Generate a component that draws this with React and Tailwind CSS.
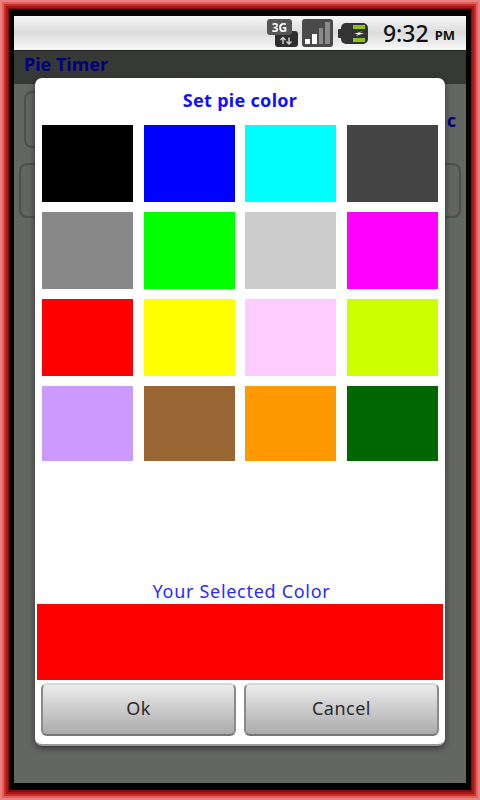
const swatches = [
  "bg-[#000000]", "bg-[#0000ff]", "bg-[#00ffff]", "bg-[#444444]",
  "bg-[#888888]", "bg-[#00ff00]", "bg-[#cccccc]", "bg-[#ff00ff]",
  "bg-[#ff0000]", "bg-[#ffff00]", "bg-[#ffccff]", "bg-[#ccff00]",
  "bg-[#cc99ff]", "bg-[#996633]", "bg-[#ff9900]", "bg-[#006600]",
];

function NetworkIcon() {
  return (
    <svg width="31" height="28" viewBox="0 0 31 28" className="blur-[0.4px]">
      <rect x="8" y="12" width="23" height="16" rx="3" fill="#2e2e2e" />
      <rect x="0" y="0" width="25" height="16" rx="3" fill="#555" />
      <text x="12.5" y="12.5" textAnchor="middle" fontSize="12" fontWeight="700" fill="#fff">3G</text>
      <path d="M16 25 V19 M13.5 21 L16 18.5 L18.5 21 M22 18.5 V24.5 M19.5 22.5 L22 25 L24.5 22.5" stroke="#ccc" strokeWidth="1.5" fill="none" />
    </svg>
  );
}

function SignalIcon() {
  return (
    <svg width="31" height="28" viewBox="0 0 31 28" className="blur-[0.4px]">
      <rect x="0" y="0" width="31" height="28" rx="3" fill="#4a4a4a" />
      <rect x="3" y="20" width="5" height="5" fill="#fff" />
      <rect x="10" y="15" width="5" height="10" fill="#fff" />
      <rect x="17" y="9" width="4" height="16" fill="#8a8a8a" />
      <rect x="23" y="3" width="5" height="22" fill="#8a8a8a" />
    </svg>
  );
}

function BatteryIcon() {
  return (
    <svg width="30" height="21" viewBox="0 0 30 21" className="blur-[0.4px]">
      <rect x="0" y="6" width="5" height="9" rx="1" fill="#333" />
      <rect x="3" y="0" width="27" height="21" rx="5" fill="#333" />
      <rect x="15" y="2" width="12" height="4" fill="#8dc21f" />
      <rect x="15" y="15" width="12" height="4" fill="#8dc21f" />
      <path d="M25 8 L16 11 L20 11 L18 13 L26 10 L21 10 Z" fill="#fff" />
    </svg>
  );
}

function BackButton({ className }) {
  return <div className={`absolute rounded-lg border-2 border-[#4e504e] bg-[#626462] ${className}`} />;
}

function DialogButton({ label }) {
  return (
    <button className="flex-1 rounded-md border-2 border-t-[#d4dad8] border-r-[#8a8a8a] border-b-[#777] border-l-[#8a8a8a] bg-gradient-to-b from-[#ececec] to-[#ababab] pb-[3px] text-[18px] leading-none tracking-[0.5px] text-[#2a2a2a]">
      {label}
    </button>
  );
}

export default function App() {
  return (
    <div
      className="h-[800px] w-[480px] bg-[#8f0a0a] pb-[10px] pl-[9px] pr-[9px] pt-[9px] shadow-[inset_0_0_0_2px_#e88080,inset_0_0_0_4px_#e06060,inset_0_0_0_6px_#c83030,inset_0_0_0_8px_#a81515]"
      style={{ fontFamily: '"Noto Sans", sans-serif' }}
    >
      <div className="h-full w-full border-x-[5px] border-t-[7px] border-b-[7px] border-black">
        <div className="relative flex h-full w-full flex-col overflow-hidden bg-[#646664]">
          {/* status bar */}
          <div className="flex h-[34px] items-center justify-end bg-gradient-to-b from-[#f6f6f6] via-[#dcdcdc] to-[#f8f8f8]">
            <NetworkIcon />
            <div className="ml-[4px] flex"><SignalIcon /></div>
            <div className="ml-[5px] flex"><BatteryIcon /></div>
            <span className="ml-[15px] text-[23px] font-medium leading-none text-[#111]">9:32</span>
            <span className="ml-[6px] mr-[11px] mt-[4px] text-[13px] font-bold leading-none text-[#111]">PM</span>
          </div>
          {/* title bar */}
          <div className="h-[34px] border-t border-[#222] bg-[#373937] pl-[10px] text-[18px] font-bold leading-[26px] text-[#000080]">
            Pie Timer
          </div>
          <BackButton className="left-[10px] top-[75px] h-[57px] w-[30px]" />
          <BackButton className="left-[5px] top-[147px] h-[55px] w-[30px]" />
          <BackButton className="right-[5px] top-[147px] h-[55px] w-[30px]" />
          <span className="absolute right-[10px] top-[95px] text-[18px] font-bold leading-none text-[#000080]">c</span>

          {/* dialog */}
          <div className="absolute left-[21px] top-[62px] flex h-[668px] w-[410px] flex-col rounded-[7px] border-b-2 border-[#999] bg-white shadow-[0_2px_6px_rgba(0,0,0,0.5)]">
            <div className="mt-[11px] text-center text-[18px] font-bold leading-[22px] tracking-[0.3px] text-[#1010ff]">Set pie color</div>
            <div className="mx-[7px] mt-[14px] grid grid-cols-4 gap-x-[10.5px] gap-y-[10px]">
              {swatches.map((color, i) => (
                <div key={i} className={`${i > 11 ? "h-[75px]" : "h-[77px]"} ${color}`} />
              ))}
            </div>
            <div className="mt-auto pl-[3px] text-center text-[18px] leading-[22px] tracking-[0.7px] text-[#2a2aff]">Your Selected Color</div>
            <div className="mx-[2px] mt-[2px] h-[76px] bg-[#ff0000]" />
            <div className="mx-[6px] mb-[8px] mt-[3px] flex h-[53px] gap-[8px]">
              <DialogButton label="Ok" />
              <DialogButton label="Cancel" />
            </div>
          </div>
        </div>
      </div>
    </div>
  );
}
